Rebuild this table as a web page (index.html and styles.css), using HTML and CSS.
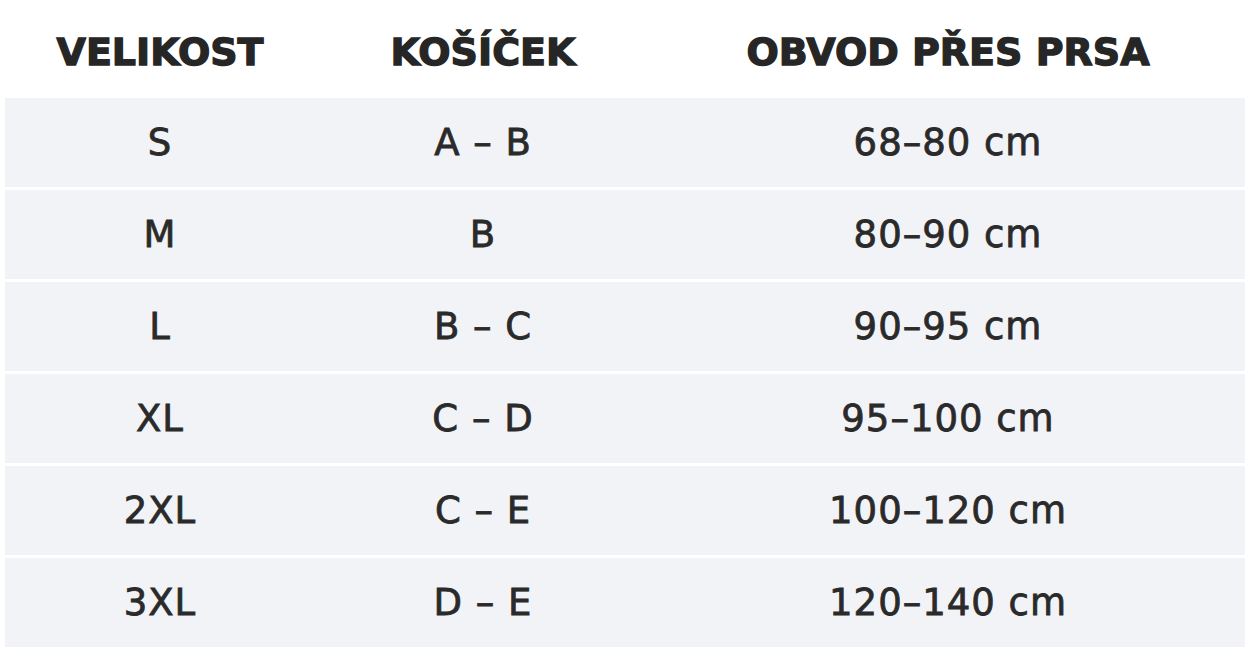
FILE: index.html
```html
<!DOCTYPE html>
<html lang="cs">
<head>
<meta charset="utf-8">
<title>Tabulka velikostí</title>
<link rel="stylesheet" href="styles.css">
</head>
<body>
<div class="size-table">
  <div class="row head">
    <div class="cell">VELIKOST</div>
    <div class="cell">KOŠÍČEK</div>
    <div class="cell">OBVOD PŘES PRSA</div>
  </div>
  <div class="row body">
    <div class="cell">S</div>
    <div class="cell">A – B</div>
    <div class="cell">68–80 cm</div>
  </div>
  <div class="row body">
    <div class="cell">M</div>
    <div class="cell">B</div>
    <div class="cell">80–90 cm</div>
  </div>
  <div class="row body">
    <div class="cell">L</div>
    <div class="cell">B – C</div>
    <div class="cell">90–95 cm</div>
  </div>
  <div class="row body">
    <div class="cell">XL</div>
    <div class="cell">C – D</div>
    <div class="cell">95–100 cm</div>
  </div>
  <div class="row body">
    <div class="cell">2XL</div>
    <div class="cell">C – E</div>
    <div class="cell">100–120 cm</div>
  </div>
  <div class="row body">
    <div class="cell">3XL</div>
    <div class="cell">D – E</div>
    <div class="cell">120–140 cm</div>
  </div>
</div>
</body>
</html>
```
FILE: styles.css
```css
html, body {
  margin: 0;
  padding: 0;
  background: #ffffff;
}
body {
  font-family: "DejaVu Sans", "Liberation Sans", sans-serif;
  color: #2a2a2a;
  overflow: hidden;
}
.size-table {
  display: flex;
  flex-direction: column;
  gap: 3px;
  margin: 0 5px;
}
.row {
  display: grid;
  grid-template-columns: 310px 336px 1fr;
  align-items: center;
}
.cell {
  text-align: center;
  white-space: nowrap;
}
.head {
  height: 98px;
  box-sizing: border-box;
  padding-top: 6px;
  margin-bottom: -3px;
  font-weight: bold;
  font-size: 38px;
  color: #262626;
  -webkit-text-stroke: 1.3px #262626;
}
.body {
  height: 89px;
  background: #f2f3f7;
  font-size: 37px;
  letter-spacing: 1px;
  -webkit-text-stroke: 0.8px #2a2a2a;
}
```
